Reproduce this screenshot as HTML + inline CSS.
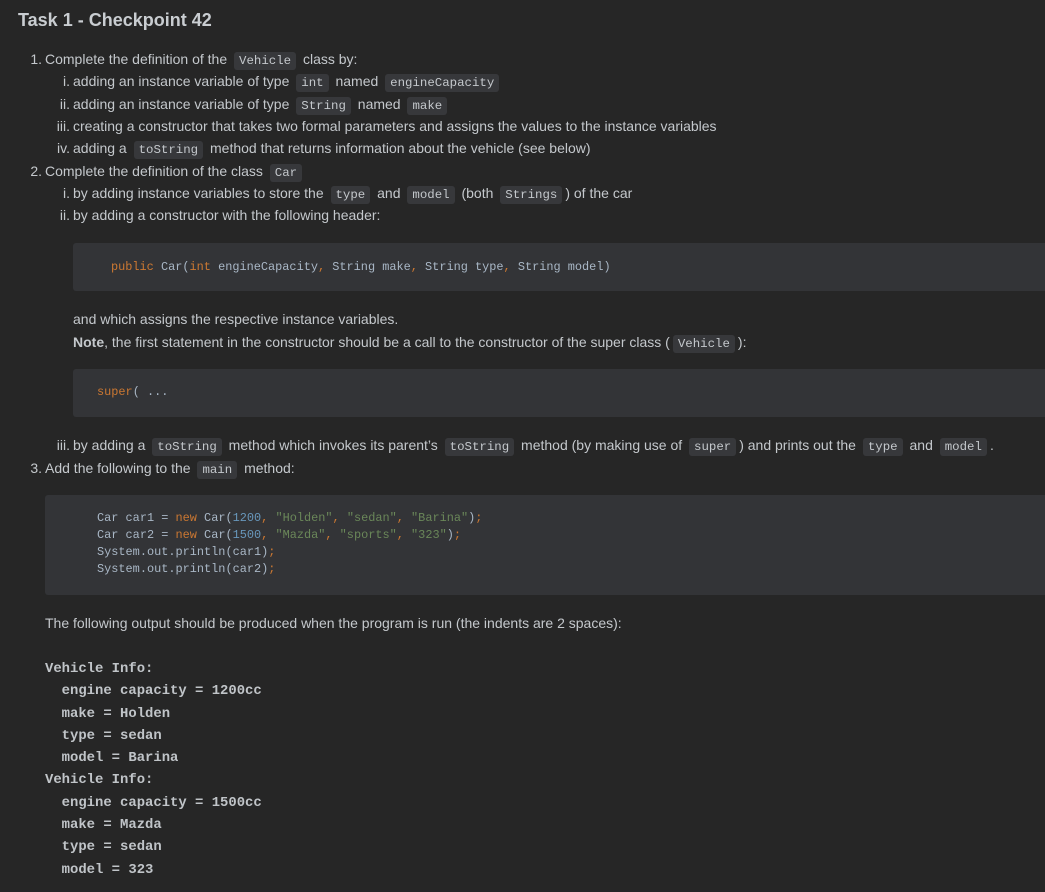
<!DOCTYPE html>
<html><head><meta charset="utf-8"><style>
body{margin:0;width:1045px;height:892px;background:#262626;color:#c4c8cc;font-family:"Liberation Sans",Arial,sans-serif;font-size:14px;overflow:hidden;position:relative}
.l{position:absolute;white-space:nowrap;line-height:20px;height:20px}
.m{position:absolute;text-align:right;white-space:nowrap;line-height:20px}
code{font-family:"Liberation Mono",monospace;font-size:12.4px;background:#37383b;border-radius:3px;padding:2px 5px;margin:0 3px;color:#c4c8cc}
.blk{position:absolute;background:#333437;border-radius:3px}
.pre{position:absolute;font-family:"Liberation Mono",monospace;font-size:11.9px;color:#a9b7c6;white-space:pre;line-height:17px}
.k{color:#cc7832}.n{color:#6897bb}.s{color:#6a8759}
.o{position:absolute;font-family:"Liberation Mono",monospace;font-weight:bold;font-size:13.9px;color:#c0c4c8;white-space:pre;line-height:20px}
h1{position:absolute;left:18px;top:10px;margin:0;font-size:18px;font-weight:bold;color:#c9cdd1}
</style></head><body>
<h1>Task 1 - Checkpoint 42</h1>

<div class="m" style="left:0;width:42px;top:49px">1.</div>
<div class="l" style="left:45px;top:49px">Complete the definition of the <code>Vehicle</code> class by:</div>
<div class="m" style="left:0;width:70px;top:71px">i.</div>
<div class="l" style="left:73px;top:71px">adding an instance variable of type <code>int</code> named <code>engineCapacity</code></div>
<div class="m" style="left:0;width:70px;top:94px">ii.</div>
<div class="l" style="left:73px;top:94px">adding an instance variable of type <code>String</code> named <code>make</code></div>
<div class="m" style="left:0;width:70px;top:116px">iii.</div>
<div class="l" style="left:73px;top:116px">creating a constructor that takes two formal parameters and assigns the values to the instance variables</div>
<div class="m" style="left:0;width:70px;top:138px">iv.</div>
<div class="l" style="left:73px;top:138px">adding a <code>toString</code> method that returns information about the vehicle (see below)</div>
<div class="m" style="left:0;width:42px;top:161px">2.</div>
<div class="l" style="left:45px;top:161px">Complete the definition of the class <code>Car</code></div>
<div class="m" style="left:0;width:70px;top:183px">i.</div>
<div class="l" style="left:73px;top:183px">by adding instance variables to store the <code>type</code> and <code>model</code> (both <code>Strings</code>) of the car</div>
<div class="m" style="left:0;width:70px;top:205px">ii.</div>
<div class="l" style="left:73px;top:205px">by adding a constructor with the following header:</div>

<div class="blk" style="left:73px;top:243px;width:980px;height:48px"></div>
<div class="pre" style="left:111px;top:259px"><span class="k">public</span> Car(<span class="k">int</span> engineCapacity<span class="k">,</span> String make<span class="k">,</span> String type<span class="k">,</span> String model)</div>

<div class="l" style="left:73px;top:309px">and which assigns the respective instance variables.</div>
<div class="l" style="left:73px;top:332px"><b>Note</b>, the first statement in the constructor should be a call to the constructor of the super class (<code>Vehicle</code>):</div>

<div class="blk" style="left:73px;top:369px;width:980px;height:48px"></div>
<div class="pre" style="left:97px;top:384px"><span class="k">super</span>( ...</div>

<div class="m" style="left:0;width:70px;top:435px">iii.</div>
<div class="l" style="left:73px;top:435px">by adding a <code>toString</code> method which invokes its parent’s <code>toString</code> method (by making use of <code>super</code>) and prints out the <code>type</code> and <code>model</code>.</div>
<div class="m" style="left:0;width:42px;top:458px">3.</div>
<div class="l" style="left:45px;top:458px">Add the following to the <code>main</code> method:</div>

<div class="blk" style="left:45px;top:495px;width:1008px;height:100px"></div>
<div class="pre" style="left:97px;top:510px">Car car1 = <span class="k">new</span> Car(<span class="n">1200</span><span class="k">,</span> <span class="s">"Holden"</span><span class="k">,</span> <span class="s">"sedan"</span><span class="k">,</span> <span class="s">"Barina"</span>)<span class="k">;</span>
Car car2 = <span class="k">new</span> Car(<span class="n">1500</span><span class="k">,</span> <span class="s">"Mazda"</span><span class="k">,</span> <span class="s">"sports"</span><span class="k">,</span> <span class="s">"323"</span>)<span class="k">;</span>
System.out.println(car1)<span class="k">;</span>
System.out.println(car2)<span class="k">;</span></div>

<div class="l" style="left:45px;top:613px">The following output should be produced when the program is run (the indents are 2 spaces):</div>

<div class="o" style="left:45px;top:658px;line-height:22.3px">Vehicle Info:
  engine capacity = 1200cc
  make = Holden
  type = sedan
  model = Barina
Vehicle Info:
  engine capacity = 1500cc
  make = Mazda
  type = sedan
  model = 323</div>
</body></html>
